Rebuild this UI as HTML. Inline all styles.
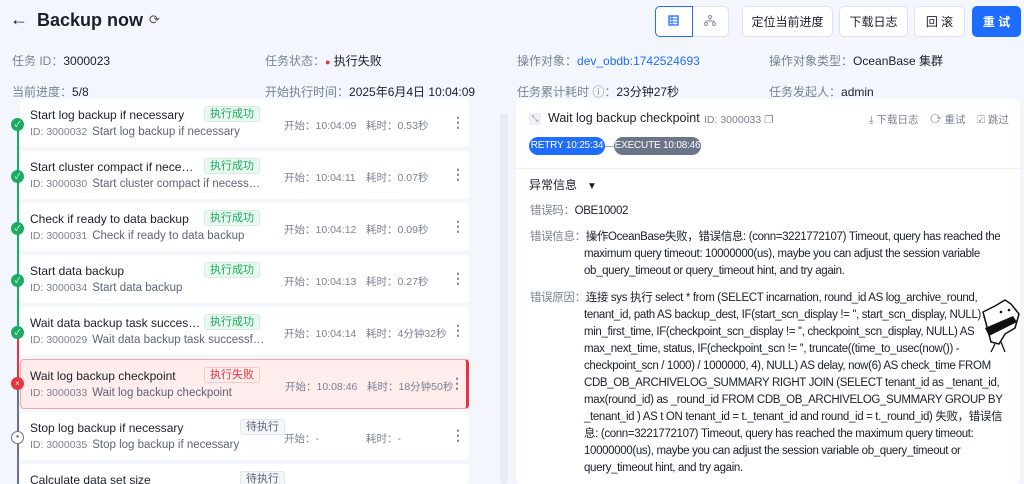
<!DOCTYPE html>
<html><head><meta charset="utf-8"><style>
*{box-sizing:border-box;margin:0;padding:0}
html,body{width:1024px;height:484px;overflow:hidden}
body{background:#f3f6fc;font-family:"Liberation Sans","Noto Sans CJK SC",sans-serif;color:#1a1f2b;position:relative;font-size:12px}
.a{position:absolute;white-space:nowrap}
.g{color:#7a8294}
.btn{position:absolute;top:6px;height:31px;background:#fff;border:1px solid #dfe3ec;border-radius:5px;font-size:12px;display:flex;align-items:center;justify-content:center;color:#1a1f2b}
.card{position:absolute;left:20px;width:449px;height:48px;background:#fff;border-radius:4px}
.card .t{position:absolute;left:10px;top:9px;font-size:12px}
.card .s{position:absolute;left:10px;top:27px;font-size:11.5px;color:#5b6478}
.card .s b{font-weight:normal;font-size:10.5px;color:#7a8294;margin-right:5px}
.tag{position:absolute;left:184px;top:7px;height:16px;padding:0 5px;font-size:11px;border-radius:3px;line-height:15px}
.ok{background:#eaf8f0;color:#1aad62;border:1px solid #d2f0df}
.fail{background:#ffecec;color:#e8353b;border:1px solid #fac7c7}
.wait{background:#f4f6fa;color:#5b6478;border:1px solid #e1e5ee;left:220px}
.st{position:absolute;left:264px;top:19px;font-size:10.5px;color:#7a8294}
.du{position:absolute;left:346px;top:19px;font-size:10.5px;color:#7a8294}
.dot3{position:absolute;left:431px;top:15px;font-size:14px;color:#7a8294;font-weight:bold}
.ic{position:absolute;left:11px;width:13px;height:13px;border-radius:50%;color:#fff;font-size:8px;text-align:center;line-height:13px}
.p{position:absolute;left:530px;font-size:11.5px;line-height:17px;width:480px;color:#1a1f2b;letter-spacing:-0.35px}
</style></head><body>
<div class="a" style="left:10px;top:9px;font-size:18px">←</div>
<div class="a" style="left:37px;top:10px;font-size:18px;font-weight:bold">Backup now</div>
<div class="a" style="left:149px;top:12px;font-size:13px;color:#555">⟳</div>

<div style="position:absolute;left:655px;top:6px;width:74px;height:31px;border:1px solid #dfe3ec;border-radius:5px;background:#fff"></div>
<div style="position:absolute;left:655px;top:6px;width:38px;height:31px;border:1px solid #1f6dff;border-radius:5px 0 0 5px;background:#fff"></div>
<svg class="a" style="left:668px;top:15px" width="11" height="11"><rect x="1" y="1" width="9" height="9" fill="none" stroke="#1f6dff" stroke-width="1.3"/><line x1="1" y1="4" x2="10" y2="4" stroke="#1f6dff"/><line x1="1" y1="7" x2="10" y2="7" stroke="#1f6dff"/><line x1="4" y1="1" x2="4" y2="10" stroke="#1f6dff"/></svg>
<svg class="a" style="left:704px;top:15px" width="12" height="11"><circle cx="6" cy="2" r="1.5" fill="none" stroke="#8a92a4"/><circle cx="2" cy="9" r="1.5" fill="none" stroke="#8a92a4"/><circle cx="10" cy="9" r="1.5" fill="none" stroke="#8a92a4"/><path d="M6 3.5V6M2 7.5V6h8v1.5" fill="none" stroke="#8a92a4"/></svg>
<div class="btn" style="left:742px;width:91px">定位当前进度</div>
<div class="btn" style="left:839px;width:69px">下载日志</div>
<div class="btn" style="left:914px;width:51px">回 滚</div>
<div class="btn" style="left:972px;width:49px;background:#1f6dff;border-color:#1f6dff;color:#fff;font-weight:bold">重 试</div>

<div class="a" style="left:12px;top:52px"><span class="g">任务 ID：</span>3000023</div>
<div class="a" style="left:265px;top:52px"><span class="g">任务状态：</span><span style="color:#e8353b;font-size:9px">●</span> 执行失败</div>
<div class="a" style="left:517px;top:52px"><span class="g">操作对象：</span><span style="color:#1f6dff">dev_obdb:1742524693</span></div>
<div class="a" style="left:769px;top:52px"><span class="g">操作对象类型：</span>OceanBase 集群</div>
<div class="a" style="left:12px;top:83px"><span class="g">当前进度：</span>5/8</div>
<div class="a" style="left:265px;top:83px"><span class="g">开始执行时间：</span>2025年6月4日 10:04:09</div>
<div class="a" style="left:517px;top:83px"><span class="g">任务累计耗时 ⓘ：</span>23分钟27秒</div>
<div class="a" style="left:769px;top:83px"><span class="g">任务发起人：</span>admin</div>

<div style="position:absolute;left:17px;top:124px;width:2px;height:236px;background:#1aad62"></div>
<div style="position:absolute;left:17px;top:333px;width:2px;height:50px;background:#e8353b"></div>
<div style="position:absolute;left:17px;top:383px;width:2px;height:101px;background:#6b7488"></div>

<div class="card" style="top:99px"><div class="t">Start log backup if necessary</div><div class="tag ok">执行成功</div><div class="s"><b>ID: 3000032</b>Start log backup if necessary</div><div class="st">开始：10:04:09</div><div class="du">耗时：0.53秒</div><div class="dot3">⋮</div></div>
<div class="card" style="top:151px"><div class="t">Start cluster compact if nece…</div><div class="tag ok">执行成功</div><div class="s"><b>ID: 3000030</b>Start cluster compact if necess…</div><div class="st">开始：10:04:11</div><div class="du">耗时：0.07秒</div><div class="dot3">⋮</div></div>
<div class="card" style="top:203px"><div class="t">Check if ready to data backup</div><div class="tag ok">执行成功</div><div class="s"><b>ID: 3000031</b>Check if ready to data backup</div><div class="st">开始：10:04:12</div><div class="du">耗时：0.09秒</div><div class="dot3">⋮</div></div>
<div class="card" style="top:255px"><div class="t">Start data backup</div><div class="tag ok">执行成功</div><div class="s"><b>ID: 3000034</b>Start data backup</div><div class="st">开始：10:04:13</div><div class="du">耗时：0.27秒</div><div class="dot3">⋮</div></div>
<div class="card" style="top:307px"><div class="t">Wait data backup task succes…</div><div class="tag ok">执行成功</div><div class="s"><b>ID: 3000029</b>Wait data backup task successf…</div><div class="st">开始：10:04:14</div><div class="du">耗时：4分钟32秒</div><div class="dot3">⋮</div></div>
<div class="card" style="top:359px;height:50px;background:#ffecec;border:1px solid #f5a5a5;border-right:3px solid #e8353b"><div class="t" style="left:9px">Wait log backup checkpoint</div><div class="tag fail" style="left:183px">执行失败</div><div class="s" style="left:9px"><b>ID: 3000033</b>Wait log backup checkpoint</div><div class="st">开始：10:08:46</div><div class="du">耗时：18分钟50秒</div><div class="dot3" style="left:429px">⋮</div></div>
<div class="card" style="top:412px"><div class="t">Stop log backup if necessary</div><div class="tag wait">待执行</div><div class="s"><b>ID: 3000035</b>Stop log backup if necessary</div><div class="st">开始：-</div><div class="du">耗时：-</div><div class="dot3">⋮</div></div>
<div class="card" style="top:464px;height:20px"><div class="t">Calculate data set size</div><div class="tag wait">待执行</div></div>

<div class="ic" style="top:118px;background:#1aad62">✓</div>
<div class="ic" style="top:170px;background:#1aad62">✓</div>
<div class="ic" style="top:222px;background:#1aad62">✓</div>
<div class="ic" style="top:274px;background:#1aad62">✓</div>
<div class="ic" style="top:326px;background:#1aad62">✓</div>
<div class="ic" style="top:377px;background:#e8353b">×</div>
<div class="ic" style="top:431px;background:#fff;border:1px solid #6b7488;color:#6b7488;line-height:11px;font-size:6px">●</div>

<div style="position:absolute;left:500px;top:113px;width:8px;height:371px;background:#e6ebf4;border-radius:3px"></div>

<div style="position:absolute;left:516px;top:99px;width:504px;height:385px;background:#fff;border-radius:5px"></div>
<div class="a" style="left:529px;top:113px;width:12px;height:12px;background:#eef0f4;font-size:8px;color:#7a8294;text-align:center;line-height:12px">⤡</div>
<div class="a" style="left:548px;top:111px;font-size:12.5px">Wait log backup checkpoint</div>
<div class="a" style="left:704px;top:114px;font-size:10.5px;color:#7a8294">ID: 3000033 ❐</div>
<div class="a" style="left:869px;top:112px;font-size:10.5px;color:#7a8294">⤓ 下载日志 &nbsp;&nbsp;&nbsp;⟳ 重试 &nbsp;&nbsp;&nbsp;☑ 跳过</div>
<div style="position:absolute;left:600px;top:146px;width:16px;height:1px;background:#9aa0ac"></div>
<div class="a" style="left:529px;top:137px;width:76px;height:18px;background:#1f6dff;color:#fff;border-radius:9px;font-size:10px;line-height:18px;text-align:center;letter-spacing:-0.2px">RETRY 10:25:34</div>
<div class="a" style="left:614px;top:137px;width:87px;height:18px;background:#6b7488;color:#fff;border-radius:9px;font-size:10px;line-height:18px;text-align:center;letter-spacing:-0.2px">EXECUTE 10:08:46</div>
<div style="position:absolute;left:516px;top:168px;width:504px;height:1px;background:#eef0f4"></div>
<div class="a" style="left:529px;top:176px;font-size:12px">异常信息 &nbsp; <span style="font-size:10px">▼</span></div>
<div class="p" style="top:203px"><span class="g">错误码：</span>OBE10002</div>
<div class="p" style="top:229px;padding-left:54px;text-indent:-54px"><span class="g">错误信息：</span>操作OceanBase失败，错误信息: (conn=3221772107) Timeout, query has reached the maximum query timeout: 10000000(us), maybe you can adjust the session variable ob_query_timeout or query_timeout hint, and try again.</div>
<div class="p" style="top:290px;padding-left:54px;text-indent:-54px;width:486px"><span class="g">错误原因：</span>连接 sys 执行 select * from (SELECT incarnation, round_id AS log_archive_round, tenant_id, path AS backup_dest, IF(start_scn_display != '', start_scn_display, NULL) AS min_first_time, IF(checkpoint_scn_display != '', checkpoint_scn_display, NULL) AS max_next_time, status, IF(checkpoint_scn != '', truncate((time_to_usec(now()) - checkpoint_scn / 1000) / 1000000, 4), NULL) AS delay, now(6) AS check_time FROM CDB_OB_ARCHIVELOG_SUMMARY RIGHT JOIN (SELECT tenant_id as _tenant_id, max(round_id) as _round_id FROM CDB_OB_ARCHIVELOG_SUMMARY GROUP BY _tenant_id ) AS t ON tenant_id = t._tenant_id and round_id = t._round_id) 失败，错误信息: (conn=3221772107) Timeout, query has reached the maximum query timeout: 10000000(us), maybe you can adjust the session variable ob_query_timeout or query_timeout hint, and try again.</div>
<svg class="a" style="left:975px;top:298px" width="49" height="58"><path d="M8 14 L20 8 L30 2 L36 6 L44 16 L40 30 L30 36 L24 46 L16 44 Z" fill="#fff" stroke="#111" stroke-width="1.5"/><path d="M10 30 L38 18 L42 24 L14 38 Z" fill="#111"/><path d="M20 46 L16 54 M26 44 L30 54" stroke="#111" stroke-width="1.3"/><circle cx="26" cy="14" r="1.3" fill="#111"/><circle cx="34" cy="12" r="1.3" fill="#111"/></svg>
</body></html>
